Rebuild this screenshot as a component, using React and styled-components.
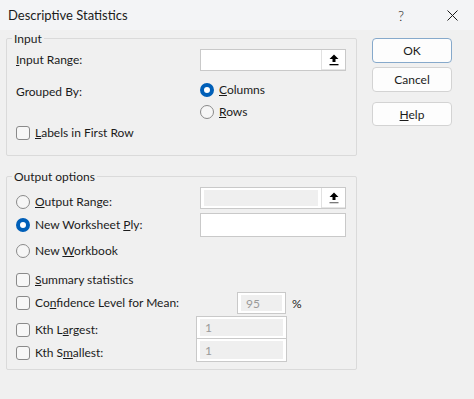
import React from 'react'
import styled, { createGlobalStyle } from 'styled-components'

const GlobalStyle = createGlobalStyle`
  body {
    margin: 0;
    background: #f0f0f0;
    font-family: Lato, "Noto Sans", sans-serif;
  }
`

const Dialog = styled.div`
  width: 474px;
  height: 399px;
  background: #f0f0f0;
  display: flex;
  flex-direction: column;
  font-size: 12px;
  color: #1b1b1b;
`

const TitleBar = styled.div`
  height: 30px;
  display: flex;
  align-items: center;
  padding-left: 8px;
  background: #f3f4f6;
`

const Title = styled.div`
  flex: 1;
  font-size: 13px;
`

const TitleButton = styled.div`
  width: 30px;
  display: grid;
  place-items: center;
  font-size: 14px;
  font-weight: 300;
  margin-right: ${p => p.$mr}px;
`

const Body = styled.div`
  display: flex;
  padding: 8px 0 0 6px;
`

const LeftCol = styled.div`
  width: 351px;
  display: flex;
  flex-direction: column;
  gap: 20px;
`

const Group = styled.div`
  position: relative;
  border: 1px solid #dadada;
  border-radius: 2px;
  padding: 10px 0 ${p => p.$pb}px 9px;
  display: flex;
  flex-direction: column;
`

const Legend = styled.span`
  position: absolute;
  top: -8px;
  left: 5px;
  padding: 0 2px;
  line-height: 16px;
  background: #f0f0f0;
`

const Row = styled.div`
  display: flex;
  align-items: ${p => p.$align || 'center'};
  height: ${p => p.$h}px;
  margin-top: ${p => p.$mt || 0}px;
`

const Label = styled.span`
  width: ${p => p.$w}px;
  flex-shrink: 0;
  line-height: 22px;
  margin-top: ${p => p.$mt || 0}px;
`

const Option = styled.label`
  display: flex;
  align-items: center;
  gap: 5px;
  line-height: 22px;
  width: ${p => (p.$w ? `${p.$w}px` : 'auto')};
  flex-shrink: 0;
  margin-top: ${p => p.$mt || 0}px;
`

const RadioCircle = styled.span`
  width: 14px;
  height: 14px;
  box-sizing: border-box;
  border-radius: 50%;
  flex-shrink: 0;
  border: ${p => (p.$on ? '4px solid #005fb8' : '1px solid #8a8a8a')};
  background: ${p => (p.$on ? '#ffffff' : '#f6f6f6')};
`

const CheckBox = styled.span`
  width: 14px;
  height: 14px;
  box-sizing: border-box;
  border-radius: 3px;
  flex-shrink: 0;
  border: 1px solid #8a8a8a;
  background: #f7f7f7;
`

const RadioStack = styled.div`
  display: flex;
  flex-direction: column;
`

const Field = styled.div`
  width: ${p => p.$w}px;
  height: ${p => p.$h || 22}px;
  box-sizing: border-box;
  margin-left: ${p => p.$ml || 0}px;
  border: 1px solid #c9c9c9;
  background: #ffffff;
  display: flex;
  padding: ${p => (p.$disabled ? '2px 3px' : '0')};
  gap: 3px;
`

const Fill = styled.div`
  flex: 1;
  background: ${p => (p.$disabled ? '#efefef' : '#ffffff')};
  color: #9a9a9a;
  padding-left: 5px;
  display: flex;
  align-items: center;
`

const PickButton = styled.div`
  width: 23px;
  display: grid;
  place-items: center;
  border-left: 1px solid #e1e1e1;
  background: #ffffff;
  margin: ${p => (p.$inset ? '-2px -3px -2px 0' : '0')};
  box-shadow: inset 0 -1px 0 #e6e6e6;
`

const Percent = styled.span`
  margin-left: 6px;
`

const ButtonCol = styled.div`
  margin-left: 15px;
  display: flex;
  flex-direction: column;
`

const Button = styled.div`
  width: 80px;
  height: ${p => p.$h}px;
  box-sizing: border-box;
  margin-top: ${p => p.$mt || 0}px;
  border: 1px solid ${p => (p.$primary ? '#86a9cb' : '#d3d3d3')};
  border-radius: 4px;
  background: #fdfdfd;
  display: grid;
  place-items: center;
`

function UploadIcon({ muted }) {
  return (
    <svg width="10" height="12" viewBox="0 0 10 12">
      <path d="M5 0.5 L9.5 5 L6.5 5 L6.5 8 L3.5 8 L3.5 5 L0.5 5 Z" fill="#000" />
      <rect x="0.5" y="10" width="9" height="1.3" fill={muted ? '#7a7a7a' : '#000'} />
    </svg>
  )
}

function CloseIcon() {
  return (
    <svg width="11" height="11" viewBox="0 0 11 11">
      <path d="M0.5 0.5 L10.5 10.5 M10.5 0.5 L0.5 10.5" stroke="#1b1b1b" strokeWidth="1" />
    </svg>
  )
}

function Radio({ on, children, w, mt }) {
  return (
    <Option $w={w} $mt={mt}>
      <RadioCircle $on={on} />
      <span>{children}</span>
    </Option>
  )
}

function Check({ children, w, mt }) {
  return (
    <Option $w={w} $mt={mt}>
      <CheckBox />
      <span>{children}</span>
    </Option>
  )
}

export default function App() {
  return (
    <Dialog>
      <GlobalStyle />
      <TitleBar>
        <Title>Descriptive Statistics</Title>
        <TitleButton $mr={21}>?</TitleButton>
        <TitleButton $mr={7}>
          <CloseIcon />
        </TitleButton>
      </TitleBar>
      <Body>
        <LeftCol>
          <Group $pb={12}>
            <Legend>Input</Legend>
            <Row $h={22}>
              <Label $w={184}>
                <u>I</u>nput Range:
              </Label>
              <Field $w={146}>
                <Fill />
                <PickButton>
                  <UploadIcon />
                </PickButton>
              </Field>
            </Row>
            <Row $h={44} $mt={8} $align="flex-start">
              <Label $w={184} $mt={2}>
                Grouped By:
              </Label>
              <RadioStack>
                <Row $h={22}>
                  <Radio on>
                    <u>C</u>olumns
                  </Radio>
                </Row>
                <Row $h={22}>
                  <Radio>
                    <u>R</u>ows
                  </Radio>
                </Row>
              </RadioStack>
            </Row>
            <Row $h={20}>
              <Check>
                <u>L</u>abels in First Row
              </Check>
            </Row>
          </Group>

          <Group $pb={7}>
            <Legend>Output options</Legend>
            <Row $h={26} $align="flex-start">
              <Radio w={184} mt={4}>
                <u>O</u>utput Range:
              </Radio>
              <Field $w={146} $disabled>
                <Fill $disabled />
                <PickButton $inset>
                  <UploadIcon muted />
                </PickButton>
              </Field>
            </Row>
            <Row $h={24}>
              <Radio w={184} on>
                New Worksheet <u>P</u>ly:
              </Radio>
              <Field $w={146} $h={24} />
            </Row>
            <Row $h={22} $mt={3}>
              <Radio>
                New <u>W</u>orkbook
              </Radio>
            </Row>
            <Row $h={22} $mt={7}>
              <Check>
                <u>S</u>ummary statistics
              </Check>
            </Row>
            <Row $h={22} $mt={1}>
              <Check w={221}>
                Co<u>n</u>fidence Level for Mean:
              </Check>
              <Field $w={49} $disabled>
                <Fill $disabled>95</Fill>
              </Field>
              <Percent>%</Percent>
            </Row>
            <Row $h={23} $mt={2}>
              <Check w={180} mt={5}>
                Kth L<u>a</u>rgest:
              </Check>
              <Field $w={91} $h={23} $disabled>
                <Fill $disabled>1</Fill>
              </Field>
            </Row>
            <Row $h={24} $mt={-1}>
              <Check w={180} mt={5}>
                Kth S<u>m</u>allest:
              </Check>
              <Field $w={91} $h={24} $disabled>
                <Fill $disabled>1</Fill>
              </Field>
            </Row>
          </Group>
        </LeftCol>

        <ButtonCol>
          <Button $primary $h={25}>OK</Button>
          <Button $h={25} $mt={4}>Cancel</Button>
          <Button $h={24} $mt={10}>
            <span>
              <u>H</u>elp
            </span>
          </Button>
        </ButtonCol>
      </Body>
    </Dialog>
  )
}
